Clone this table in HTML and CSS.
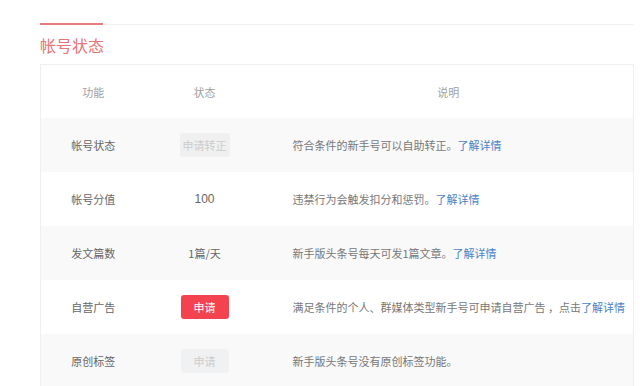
FILE: index.html
```html
<!DOCTYPE html>
<html lang="zh-CN">
<head>
<meta charset="utf-8">
<link rel="stylesheet" href="styles.css">
</head>
<body>
<div class="page">
  <div class="tabs"><div class="tab-active"></div></div>
  <h2 class="title">帐号状态</h2>
  <table class="status-table">
    <colgroup>
      <col class="c1"><col class="c2"><col>
    </colgroup>
    <thead>
      <tr><th>功能</th><th>状态</th><th>说明</th></tr>
    </thead>
    <tbody>
      <tr>
        <td class="name">帐号状态</td>
        <td class="state"><span class="badge badge-disabled">申请转正</span></td>
        <td class="desc">符合条件的新手号可以自助转正。<a class="link">了解详情</a></td>
      </tr>
      <tr>
        <td class="name">帐号分值</td>
        <td class="state num">100</td>
        <td class="desc">违禁行为会触发扣分和惩罚。<a class="link">了解详情</a></td>
      </tr>
      <tr>
        <td class="name">发文篇数</td>
        <td class="state">1篇/天</td>
        <td class="desc">新手版头条号每天可发1篇文章。<a class="link">了解详情</a></td>
      </tr>
      <tr>
        <td class="name">自营广告</td>
        <td class="state"><span class="badge badge-primary">申请</span></td>
        <td class="desc">满足条件的个人、群媒体类型新手号可申请自营广告 ，点击<a class="link">了解详情</a></td>
      </tr>
      <tr>
        <td class="name">原创标签</td>
        <td class="state"><span class="badge badge-disabled wide">申请</span></td>
        <td class="desc">新手版头条号没有原创标签功能。</td>
      </tr>
    </tbody>
  </table>
</div>
</body>
</html>
```
FILE: styles.css
```css
html, body {
  margin: 0;
  padding: 0;
  background: #fff;
}
body {
  font-family: "Noto Sans CJK SC", "Noto Sans", sans-serif;
  color: #666;
}
.page {
  padding-left: 40px;
  width: 594px;
}
.tabs {
  height: 24px;
  border-bottom: 1px solid #f2f2f2;
  display: flex;
  align-items: flex-end;
}
.tab-active {
  width: 63px;
  height: 2px;
  background: #eb7a7d;
  margin-bottom: -1px;
}
.title {
  margin: 8px 0 7px;
  font-size: 16px;
  line-height: 24px;
  font-weight: normal;
  color: #ea7377;
}
.status-table {
  width: 594px;
  border-collapse: collapse;
  border: 1px solid #efefef;
  table-layout: fixed;
  font-size: 11px;
}
.c1 { width: 105px; }
.c2 { width: 118px; }
.status-table th {
  height: 53px;
  padding: 0;
  font-weight: normal;
  color: #a0a0a0;
  text-align: center;
  background: #fff;
}
.status-table td {
  height: 54px;
  padding: 0;
}
.status-table tbody tr:nth-child(odd) td {
  background: #f9f9f9;
}
.name {
  text-align: center;
  color: #666;
}
.state {
  text-align: center;
  color: #666;
}
.num {
  font-family: "Liberation Sans", Arial, sans-serif;
  font-size: 12px;
}
.desc {
  padding-left: 29px !important;
  color: #777;
  white-space: nowrap;
}
.link {
  color: #4a82c4;
  cursor: pointer;
}
.badge {
  display: inline-block;
  height: 24px;
  line-height: 24px;
  padding: 0 3px;
  border-radius: 3px;
}
.badge-disabled {
  background: #f0f0f0;
  color: #cccccc;
}
.badge-disabled.wide,
.badge-primary {
  width: 48px;
  padding: 0;
}
.badge-primary {
  background: #f2434f;
  color: #fff;
}
.badge-disabled.wide {
  background: #f0f1f3;
}
```
